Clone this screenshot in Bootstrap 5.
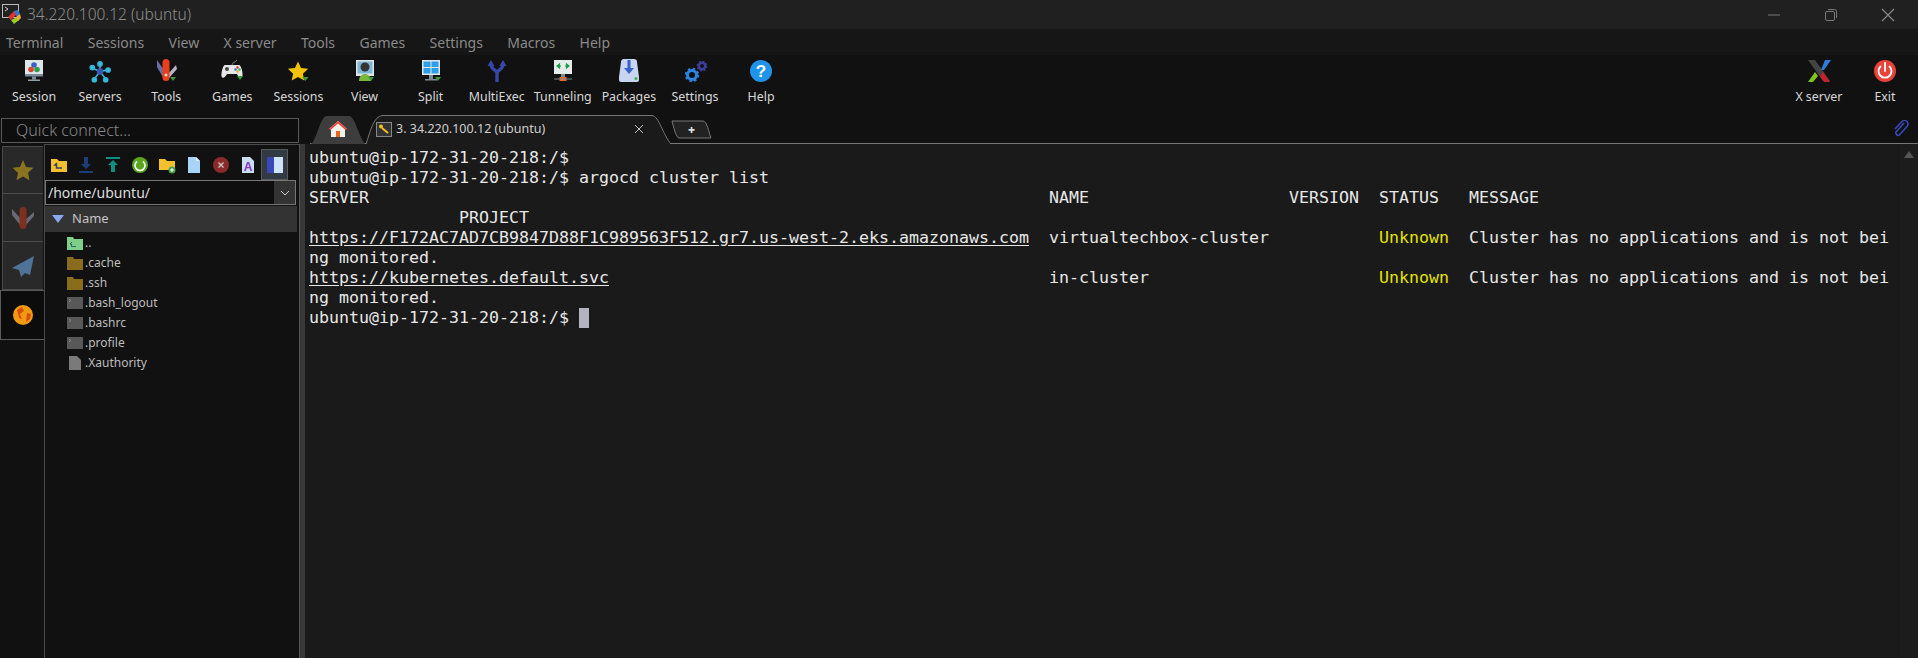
<!DOCTYPE html>
<html lang="en">
<head>
<meta charset="utf-8">
<title>34.220.100.12 (ubuntu)</title>
<link href="https://cdn.jsdelivr.net/npm/bootstrap@5.3.0/dist/css/bootstrap.min.css" rel="stylesheet">
<style>
html,body{height:100%;margin:0;overflow:hidden;background:#111;font-family:"Noto Sans","Open Sans",sans-serif}
.moba{height:658px;width:1918px}
.ttl{height:29px;background:#202020;color:#8d8d8d;font-size:15.5px;padding-left:2px;font-weight:300}
.ttl svg.lg{margin-right:3px}
.winbtns{margin-left:auto;margin-right:2px}
.winbtns span{width:57px;display:flex;justify-content:center;align-items:center}
.menubar{height:26px;background:#161616;color:#8a8a8a;font-size:14px}
.mi1{margin-left:6px}.menubar span+span{margin-left:24.4px}
.tbar{height:60px;background:#111;color:#d8d8d8;font-size:12.4px;padding-left:1px}
.tbtn{width:66.1px;height:60px;display:flex;flex-direction:column;align-items:center;padding-top:4px;white-space:nowrap}
.tbtn svg{width:26px;height:26px;display:block}
.tbtn span{margin-top:3px;line-height:17px}
.rowtabs{height:29px;background:#111}
.qc{width:298px;height:25px;margin:3px 0 0 1px;border:1px solid #5a5a5a;color:#888;font-size:16px;line-height:22px;padding-left:14px;background:#0e0e0e;font-weight:300}
.tabs{margin-left:11px;position:relative;flex:1;height:29px;border-bottom:1px solid #777}
.tabhome{width:55px;position:relative;display:flex;justify-content:center;align-items:center}
.tabhome svg.sh,.tabact svg.sh,.tabplus svg.sh{position:absolute;left:0;top:0}
.tabhome svg.ic{position:relative;width:18px;height:18px}
.tabact{width:305px;position:relative;color:#cfcfcf;font-size:12.5px;display:flex;align-items:center;padding-left:10px;margin-left:1px}
.tabact>*{position:relative}
.tabact .cls{margin-left:auto;margin-right:27px}
.tabact svg.sh{position:absolute}
.tabplus{width:41px;height:19px;position:relative;margin:5px 0 0 0;color:#ddd;font-size:12px;display:flex;align-items:center;justify-content:center;font-weight:700}
.tabplus b{position:relative;line-height:1}
.clip{margin-left:auto;margin-right:9px;align-self:center}
.main{height:514px;background:#111}
.stabs{width:44px;flex:none;padding-top:2px}
.stab{width:41px;margin-left:2px;height:48px;background:#292929;border:1px solid #4a4a4a;border-right:0;display:flex;align-items:center;justify-content:center}
.stab+.stab{border-top:0}
.stab.on{background:#0c0c0c;margin-left:0;width:44px;height:50px;border:1px solid #5a5a5a;border-right:0;position:relative;z-index:1;margin-right:-1px}
.spanel{width:255px;flex:none;background:#111;border-top:1px solid #4a4a4a;border-left:1px solid #4a4a4a}
.ftools{height:35px;display:flex;align-items:flex-start;padding-top:4px;box-sizing:border-box}
.fi{width:27px;height:31px;display:flex;align-items:center;justify-content:center;flex:none}
.fi svg{width:18px;height:18px}
.fi.on{background:#323a44;border:1px solid #5a5a5a}
.pathbox{height:25px;border:1px solid #777;margin:0 3px 0 0;display:flex;color:#ddd;font-size:14px;line-height:23px;background:#0e0e0e;padding-left:2px}
.pathbox i{margin-left:auto;width:21px;background:#333;display:flex;align-items:center;justify-content:center}
.fhead{height:26px;background:#333;margin:1px 2px 0 0;color:#c4c4c4;font-size:13px;display:flex;align-items:center;padding-left:7px;gap:8px}
.flist{padding:1px 0 0 22px;color:#bdbdbd;font-size:12px}
.frow{height:20px;display:flex;align-items:center;gap:2px;line-height:20px}
.frow svg{width:16px;height:14px;flex:none}
.gutter{width:1px;flex:none;background:#555}
.gutter2{width:5px;flex:none;background:#383838}
.term{flex:1;background:#1a1a1a;color:#e8e8e8;font-family:"DejaVu Sans Mono","Liberation Mono",monospace;font-size:16.63px;line-height:20px;padding:4px 0 0 4px;overflow:hidden}
.tline{white-space:pre;height:20px}
.term u{text-underline-offset:2px}
.ykn{color:#e3e300}
.csr{display:inline-block;width:10px;height:20px;background:#b4b4c0;vertical-align:top}
.vbar{width:18px;flex:none;background:#1c1c1c;display:flex;justify-content:center;padding-top:7px}
</style>
</head>
<body>
<div class="moba d-flex flex-column">
  <div class="ttl d-flex align-items-center">
    <svg class="lg" width="22" height="22" viewBox="0 0 22 22"><rect x="0.5" y="0.5" width="16" height="13" fill="#222" stroke="#bbb"/><path d="M3 3l3 2-3 2" stroke="#ccc" fill="none"/><path d="M6 13l6-6 3 3-6 6z" fill="#d33"/><path d="M12 7l4-1 2 4-3 3z" fill="#37c"/><path d="M9 16l6-3 2 3-5 4z" fill="#9c2"/><path d="M14 13l4-3 1 4-3 3z" fill="#ea3"/></svg>
    <span>34.220.100.12 (ubuntu)</span>
    <div class="winbtns d-flex">
      <span><svg width="14" height="12" viewBox="0 0 14 12"><path d="M1 6h12" stroke="#777"/></svg></span>
      <span><svg width="14" height="14" viewBox="0 0 14 14" fill="none" stroke="#777"><rect x="1.5" y="3.5" width="9" height="9" rx="1.5"/><path d="M4 1.500h6.500a2 2 0 0 1 2 2V10"/></svg></span>
      <span><svg width="14" height="14" viewBox="0 0 14 14"><path d="M1 1l12 12M13 1L1 13" stroke="#8a8a8a" stroke-width="1.100"/></svg></span>
    </div>
  </div>
  <div class="menubar d-flex align-items-center">
    <span class="mi1">Terminal</span><span>Sessions</span><span>View</span><span>X server</span><span>Tools</span><span>Games</span><span>Settings</span><span>Macros</span><span>Help</span>
  </div>
  <div class="tbar d-flex">
    <div class="tbtn"><svg viewBox="0 0 26 26"><rect x="4" y="1" width="18" height="16" fill="#dfe6ea"/><rect x="4" y="15" width="18" height="2.500" fill="#7b8c96"/><rect x="11" y="17.500" width="4" height="3" fill="#7b8c96"/><rect x="7" y="20.500" width="12" height="1.500" fill="#90a0a8"/><circle cx="13" cy="6" r="2.800" fill="#3b62c9"/><circle cx="10" cy="10.500" r="2.800" fill="#d9472f"/><circle cx="16" cy="10.500" r="2.800" fill="#2f9e4a"/></svg><span>Session</span></div>
    <div class="tbtn"><svg viewBox="-3 -1 32 27" stroke="#35b5d5" stroke-width="2"><path d="M13 12L13 4M13 12L22 10M13 12L20 21M13 12L6 21M13 12L4 8" fill="none"/><circle cx="13" cy="2.500" r="2.500" fill="#35c5e5"/><circle cx="23" cy="10" r="2.500" fill="#35c5e5"/><circle cx="20" cy="22" r="2.500" fill="#35c5e5"/><circle cx="6" cy="22" r="2.500" fill="#35c5e5"/><circle cx="3.500" cy="7" r="2.500" fill="#35c5e5"/><circle cx="13" cy="12" r="4" fill="#3c56b5" stroke="none"/></svg><span>Servers</span></div>
    <div class="tbtn"><svg viewBox="0 0 26 26"><path d="M4 1l9 13-2 6L4 8z" fill="#6a6ea8"/><path d="M23 6L15 15l1 4 8-9z" fill="#b4b4c8"/><rect x="9.500" y="0" width="7" height="22" rx="3.500" fill="#e8401c"/><path d="M11.500 16h3M13 14.500v3" stroke="#fff"/><path d="M17 18h6l-3 4z" fill="#3a9a3a"/></svg><span>Tools</span></div>
    <div class="tbtn"><svg viewBox="0 0 26 26"><path d="M6 6h14c2 0 4 7 3.500 11-1 3-4 2-5.500-2H8c-2 4-5 5-5.500 2C2 14 4 6 6 6z" fill="#e6e6e6"/><circle cx="8" cy="10" r="2" fill="#444"/><circle cx="18.500" cy="8.500" r="1.200" fill="#d33"/><circle cx="20.500" cy="10.500" r="1.200" fill="#3b3"/><circle cx="16.500" cy="10.500" r="1.200" fill="#37c"/><circle cx="18.500" cy="12.500" r="1.200" fill="#ea3"/><path d="M13 6c0-3 3-2 5-5" stroke="#888" fill="none"/><path d="M18 17h6l-3 4z" fill="#3a9a3a"/></svg><span>Games</span></div>
    <div class="tbtn"><svg viewBox="-3 -2 32 32"><path d="M13 1l3.700 8 8.800 1-6.500 6 1.800 8.500L13 20l-7.800 4.500L7 16 .5 10l8.800-1z" fill="#f4c20d"/><path d="M18 20h8l-4 5z" fill="#3a9a3a"/></svg><span>Sessions</span></div>
    <div class="tbtn"><svg viewBox="0 0 26 26"><rect x="4" y="1" width="18" height="16" fill="#dfe6ea"/><rect x="5.500" y="2.500" width="15" height="12" fill="#7fb6d6"/><circle cx="13" cy="8" r="4.500" fill="#333"/><path d="M7 22c0-5 3-7 6-7s6 2 6 7z" fill="#7ab53c"/><path d="M16 18h6l-3 4z" fill="#3a9a3a"/></svg><span>View</span></div>
    <div class="tbtn"><svg viewBox="0 0 26 26"><rect x="4" y="1" width="18" height="15" fill="#dfe6ea"/><rect x="5.500" y="2.500" width="7" height="5.500" fill="#2d9fe8"/><rect x="13.500" y="2.500" width="7" height="5.500" fill="#2d9fe8"/><rect x="5.500" y="9" width="7" height="5.500" fill="#2d9fe8"/><rect x="13.500" y="9" width="7" height="5.500" fill="#2d9fe8"/><rect x="11" y="16" width="4" height="4" fill="#7b8c96"/><rect x="7" y="20" width="12" height="1.500" fill="#7b8c96"/><path d="M17 18h6l-3 4z" fill="#3a9a3a"/></svg><span>Split</span></div>
    <div class="tbtn"><svg viewBox="0 0 26 26"><path d="M13 23V14C13 11 7 11 7 5M13 14c0-3 6-3 6-9" stroke="#3747a8" stroke-width="3.400" fill="none"/><path d="M3.500 7l3.500-6 3.500 6zM15.500 7l3.500-6 3.500 6z" fill="#3747a8"/></svg><span>MultiExec</span></div>
    <div class="tbtn"><svg viewBox="0 0 26 26"><rect x="4" y="1" width="18" height="14" fill="#e6ecec"/><path d="M7 7h4M9.500 5L7 7l2.500 2zM19 7h-4M16.500 5L19 7l-2.500 2z" stroke="#1f9d45" fill="#1f9d45" stroke-width="1.200"/><rect x="11" y="15" width="4" height="3" fill="#7b8c96"/><rect x="9.500" y="18" width="7" height="4" fill="#e8661c"/><path d="M4 20h18" stroke="#7b8c96"/></svg><span>Tunneling</span></div>
    <div class="tbtn"><svg viewBox="0 0 26 26"><path d="M5 3a3 3 0 0 1 3-3h10a3 3 0 0 1 3 3l2 15v3a2 2 0 0 1-2 2H5a2 2 0 0 1-2-2v-3z" fill="#c7d5f0"/><path d="M11.500 1h3v8h3.500l-5 6-5-6h3.500z" fill="#3b62c9"/><circle cx="20" cy="19.500" r="1.500" fill="#3fb04f"/></svg><span>Packages</span></div>
    <div class="tbtn"><svg viewBox="0 0 26 26"><circle cx="10" cy="16" r="4.500" fill="none" stroke="#2a84e0" stroke-width="3"/><circle cx="10" cy="16" r="6.200" fill="none" stroke="#2a84e0" stroke-width="2" stroke-dasharray="2.400 2.470"/><circle cx="20" cy="7" r="3.200" fill="none" stroke="#3d3d9e" stroke-width="2.500"/><circle cx="20" cy="7" r="4.600" fill="none" stroke="#3d3d9e" stroke-width="1.600" stroke-dasharray="1.800 1.810"/></svg><span>Settings</span></div>
    <div class="tbtn"><svg viewBox="0 0 26 26"><circle cx="13" cy="12" r="11" fill="#1f94ea"/><text x="13" y="18" text-anchor="middle" font-size="17" font-weight="700" font-family="Liberation Sans" fill="#fff">?</text></svg><span>Help</span></div>
    <div class="tbtn ms-auto"><svg viewBox="0 0 26 26"><path d="M2 1h7l15 21h-7z" fill="#444"/><path d="M15 11l4-10h6l-7 10z" fill="#2a7de0"/><path d="M2 23l7-10 3 4-5 6z" fill="#7fc31c"/><path d="M17 13l7 10h-6l-4-6z" fill="#c8202c"/></svg><span>X server</span></div>
    <div class="tbtn"><svg viewBox="0 0 26 26"><circle cx="13" cy="12" r="11" fill="#e8443a"/><path d="M8.500 7.500a6.500 6.500 0 1 0 9 0M13 4v8" stroke="#fff" stroke-width="1.800" fill="none" stroke-linecap="round"/></svg><span>Exit</span></div>
  </div>
  <div class="rowtabs d-flex">
    <div class="qc">Quick connect...</div>
    <div class="tabs d-flex">
      <div class="tabhome"><svg class="sh" width="55" height="29" viewBox="0 0 55 29"><path d="M0 29C6 29 9 4 16 1H39C45 1 49 22 55 29z" fill="#3d3d3d"/></svg><svg class="ic" viewBox="0 0 18 18"><path d="M9 1L0 9h2v8h14V9h2z" fill="#f4f0ea"/><path d="M9 1L0 9l1.500 1L9 3.500 16.500 10 18 9z" fill="#e8443a"/><rect x="7" y="11" width="4" height="6" fill="#e8661c"/></svg></div>
      <div class="tabact"><svg class="sh" width="305" height="29" viewBox="0 0 305 29"><path d="M0 29C4 18 7 1 17 .5H286C293 1 297 20 305 29" fill="#1a1a1a" stroke="#777"/></svg>
        <svg width="16" height="15" viewBox="0 0 16 15"><rect x=".5" y=".5" width="15" height="14" fill="#333" stroke="#888"/><circle cx="5" cy="4.500" r="2" fill="#f0c020"/><path d="M6 6l6 5" stroke="#f0c020" stroke-width="2"/></svg>
        <span class="ms-1">3. 34.220.100.12 (ubuntu)</span>
        <svg class="cls" width="10" height="10" viewBox="0 0 10 10"><path d="M1 1l8 8M9 1L1 9" stroke="#bbb"/></svg>
      </div>
      <div class="tabplus"><svg class="sh" width="41" height="19" viewBox="0 0 41 19"><path d="M1 1H32C36 1 38 13 40 18H8C5 18 2 5 1 1z" fill="#222" stroke="#777"/></svg><b>+</b></div>
      <svg class="clip" width="16" height="18" viewBox="0 0 16 18" fill="none" stroke="#3a48b8" stroke-width="1.600"><path d="M11 3L3.500 11.500a2.200 2.200 0 0 0 3.300 3L14 6.500a3.500 3.500 0 0 0-5-5L2 9"/></svg>
    </div>
  </div>
  <div class="main d-flex">
    <div class="stabs">
      <div class="stab"><svg width="22" height="22" viewBox="0 0 22 22"><path d="M11 1l3 7 7.500.8-5.500 5 1.500 7.500L11 17.500 4.500 21.300 6 14 .5 8.800 8 8z" fill="#8a7420"/></svg></div>
      <div class="stab"><svg width="24" height="24" viewBox="0 0 24 24"><path d="M1 3l10 11-1 6L1 9zM23 6l-9 8 1 5 8-9z" fill="#666a76"/><rect x="8.500" y="1" width="7" height="22" rx="3.500" fill="#7e3020"/></svg></div>
      <div class="stab"><svg width="24" height="24" viewBox="0 0 24 24"><path d="M23 2L1 14l7 2zM23 2L8 16l2 7 4-4 5 2z" fill="#4f7396"/></svg></div>
      <div class="stab on"><svg width="22" height="22" viewBox="0 0 22 22"><circle cx="11" cy="11" r="10" fill="#f09a10"/><path d="M5 6l5-3 2 4-4 3 2 5-3-1zM15 9l4 1-1 5-4 3z" fill="#d6500c"/></svg></div>
    </div>
    <div class="spanel">
      <div class="ftools">
        <div class="fi"><svg viewBox="0 0 18 18"><path d="M1 3h6l2 2h8v11H1z" fill="#f4c030"/><path d="M7 7l-2 2h1.500v3H12" stroke="#345" stroke-width="1.500" fill="none"/></svg></div>
        <div class="fi"><svg viewBox="0 0 18 18"><path d="M7 1h4v7h3l-5 5-5-5h3zM2 15h14v2H2z" fill="#1c3e78"/></svg></div>
        <div class="fi"><svg viewBox="0 0 18 18"><path d="M2 1h14v2H2zM9 4l5 5h-3v7H7V9H4z" fill="#0f8f82"/></svg></div>
        <div class="fi"><svg viewBox="0 0 18 18"><circle cx="9" cy="9" r="8" fill="#5aa51e"/><path d="M6 5.500a5 5 0 1 0 6 0" stroke="#fff" stroke-width="1.600" fill="none"/></svg></div>
        <div class="fi"><svg viewBox="0 0 18 18"><path d="M1 3h6l2 2h8v9H1z" fill="#f4c030"/><circle cx="14" cy="14" r="3.500" fill="#4a9d4a"/><path d="M12 14h4M14 12v4" stroke="#fff"/></svg></div>
        <div class="fi"><svg viewBox="0 0 18 18"><path d="M3 1h8l4 4v12H3z" fill="#a8d4f8"/><path d="M11 1v4h4z" fill="#e0f0ff"/></svg></div>
        <div class="fi"><svg viewBox="0 0 18 18"><circle cx="9" cy="9" r="8" fill="#8a2a2a"/><path d="M6.500 6.500l5 5M11.500 6.500l-5 5" stroke="#ccc" stroke-width="1.300"/></svg></div>
        <div class="fi"><svg viewBox="0 0 18 18"><path d="M3 1h8l4 4v12H3z" fill="#c9def0"/><text x="9" y="15" text-anchor="middle" font-size="12" font-weight="700" font-family="Liberation Sans" fill="#8a34c8">A</text></svg></div>
        <div class="fi on"><svg viewBox="0 0 18 18"><rect x="1" y="1" width="7" height="16" fill="#3a48b8"/><rect x="8" y="1" width="9" height="16" fill="#cfe4fa"/></svg></div>
      </div>
      <div class="pathbox"><span>/home/ubuntu/</span><i><svg width="10" height="6" viewBox="0 0 10 6"><path d="M1 1l4 4 4-4" stroke="#ccc" fill="none"/></svg></i></div>
      <div class="fhead"><svg width="12" height="9" viewBox="0 0 12 9"><path d="M0 0h12L6 8z" fill="#8aa8f0"/></svg><span>Name</span></div>
      <div class="flist">
        <div class="frow"><svg viewBox="0 0 16 14"><path d="M0 1h6l1 2h9v11H0z" fill="#7fce8a"/><path d="M5 6L3 8h1.500v2.500H9" stroke="#366" fill="none"/></svg><span>..</span></div>
        <div class="frow"><svg viewBox="0 0 16 14"><path d="M0 1h6l1 2h9v11H0z" fill="#8a6d1c"/></svg><span>.cache</span></div>
        <div class="frow"><svg viewBox="0 0 16 14"><path d="M0 1h6l1 2h9v11H0z" fill="#8a6d1c"/></svg><span>.ssh</span></div>
        <div class="frow"><svg viewBox="0 0 16 14"><rect y="1" width="16" height="12" fill="#585858"/><path d="M2 3l2 1.500L2 6" stroke="#888" fill="none"/></svg><span>.bash_logout</span></div>
        <div class="frow"><svg viewBox="0 0 16 14"><rect y="1" width="16" height="12" fill="#585858"/><path d="M2 3l2 1.500L2 6" stroke="#888" fill="none"/></svg><span>.bashrc</span></div>
        <div class="frow"><svg viewBox="0 0 16 14"><rect y="1" width="16" height="12" fill="#585858"/><path d="M2 3l2 1.500L2 6" stroke="#888" fill="none"/></svg><span>.profile</span></div>
        <div class="frow"><svg viewBox="0 0 16 14"><path d="M2 0h8l4 4v10H2z" fill="#7a7a7a"/></svg><span>.Xauthority</span></div>
      </div>
    </div>
    <div class="gutter"></div>
    <div class="gutter2"></div>
    <div class="term">
      <div class="tline">ubuntu@ip-172-31-20-218:/$</div>
      <div class="tline">ubuntu@ip-172-31-20-218:/$ argocd cluster list</div>
      <div class="tline">SERVER                                                                    NAME                    VERSION  STATUS   MESSAGE</div>
      <div class="tline">               PROJECT</div>
      <div class="tline"><u>https://F172AC7AD7CB9847D88F1C989563F512.gr7.us-west-2.eks.amazonaws.com</u>  virtualtechbox-cluster           <span class="ykn">Unknown</span>  Cluster has no applications and is not bei</div>
      <div class="tline">ng monitored.</div>
      <div class="tline"><u>https://kubernetes.default.svc</u>                                            in-cluster                       <span class="ykn">Unknown</span>  Cluster has no applications and is not bei</div>
      <div class="tline">ng monitored.</div>
      <div class="tline">ubuntu@ip-172-31-20-218:/$ <span class="csr"></span></div>
    </div>
    <div class="vbar"><svg width="10" height="7" viewBox="0 0 10 7"><path d="M0 7l5-7 5 7z" fill="#555"/></svg></div>
  </div>
</div>
</body>
</html>
